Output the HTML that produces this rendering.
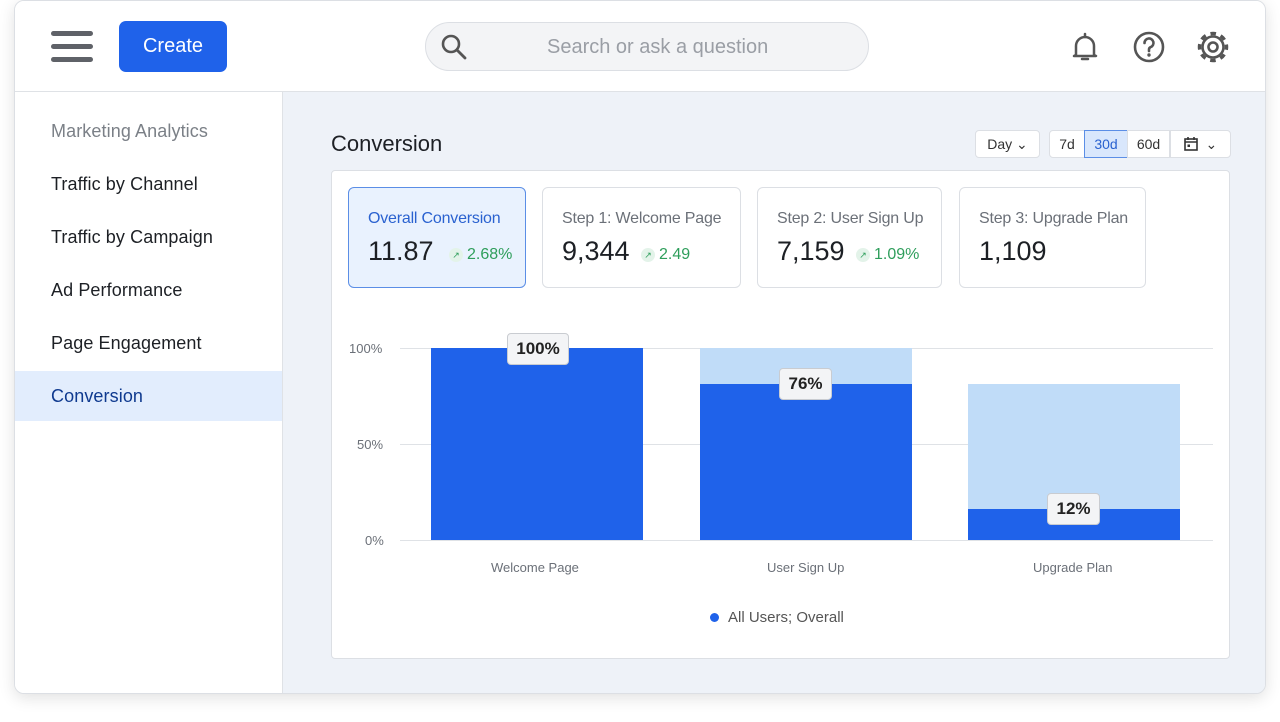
<!DOCTYPE html>
<html><head><meta charset="utf-8"><style>
*{box-sizing:border-box;margin:0;padding:0}
body{width:1280px;height:722px;background:#fff;font-family:"Liberation Sans",sans-serif;position:relative;overflow:hidden}
.frame{position:absolute;left:14px;top:0;width:1252px;height:694px;border:1px solid #dcdfe4;border-radius:10px;overflow:hidden;box-shadow:0 4px 16px rgba(0,0,0,.12);background:#fff}
.hdr{position:absolute;left:0;top:0;width:100%;height:91px;border-bottom:1px solid #dfe2e6;background:#fff}
.side{position:absolute;left:0;top:91px;width:268px;bottom:0;border-right:1px solid #dfe2e6;background:#fff}
.main{position:absolute;left:268px;top:91px;right:0;bottom:0;background:#eef2f8}
.abs{position:absolute}
.nav{position:absolute;left:36px;font-size:18px;color:#1d2025;letter-spacing:.1px}
.card{position:absolute;top:187px;height:101px;border:1px solid #dcdfe4;border-radius:6px;background:#fff}
.card .t{position:absolute;left:19px;top:22px;font-size:16px;color:#6b7078;letter-spacing:-.2px}
.card .v{position:absolute;left:19px;top:48px;font-size:27px;color:#1d2025}
.card .d{position:absolute;top:58px;font-size:16px;color:#2e9e5b}
.card .d i{display:inline-block;width:14px;height:14px;border-radius:7px;background:#e3f3e9;font-style:normal;font-size:9px;text-align:center;line-height:14px;margin-right:4px;vertical-align:1px}
.lbl{position:absolute;background:#f3f4f6;border:1px solid #c9ccd1;border-radius:4px;font-weight:bold;font-size:17px;color:#222;text-align:center;line-height:30px;height:32px}
.ax{position:absolute;font-size:13px;color:#6b7078}
.gl{position:absolute;left:400px;width:813px;height:1px;background:#dfe2e6}
.btn{position:absolute;top:130px;height:28px;border:1px solid #dcdfe4;background:#fff;font-size:14px;color:#333;line-height:26px;text-align:center}
</style></head><body>
<div class="frame">
 <div class="hdr">
  <div class="abs" style="left:36px;top:30px;width:42px;height:5px;background:#5f6268;border-radius:3px"></div>
  <div class="abs" style="left:36px;top:43px;width:42px;height:5px;background:#5f6268;border-radius:3px"></div>
  <div class="abs" style="left:36px;top:56px;width:42px;height:5px;background:#5f6268;border-radius:3px"></div>
  <div class="abs" style="left:104px;top:20px;width:108px;height:51px;background:#1f62ea;border-radius:7px;color:#fff;font-size:20px;text-align:center;line-height:51px">Create</div>
  <div class="abs" style="left:410px;top:21px;width:444px;height:49px;background:#f3f4f6;border:1px solid #dcdfe4;border-radius:25px"></div>
  <svg class="abs" style="left:425px;top:32px" width="28" height="28" viewBox="0 0 28 28"><circle cx="11" cy="11" r="8" fill="none" stroke="#555" stroke-width="2.6"/><path d="M17 17l8 8" stroke="#555" stroke-width="2.8" stroke-linecap="round"/></svg>
  <div class="abs" style="left:532px;top:35px;font-size:20px;color:#9a9ea5">Search or ask a question</div>
  <svg class="abs" style="left:1056px;top:30px" width="28" height="32" viewBox="0 0 28 32"><path d="M5 24V15a9 9 0 0 1 18 0v9l2 1H3z" fill="none" stroke="#555" stroke-width="2.5" stroke-linejoin="round"/><path d="M14 3v3M11 28h6" stroke="#555" stroke-width="2.5" stroke-linecap="round"/></svg>
  <svg class="abs" style="left:1117px;top:29px" width="34" height="34" viewBox="0 0 34 34"><circle cx="17" cy="17" r="14" fill="none" stroke="#555" stroke-width="2.6"/><path d="M12.5 13a4.5 4.5 0 1 1 6 4.2c-1 .5-1.5 1.2-1.5 2.3v1.5" fill="none" stroke="#555" stroke-width="2.6" stroke-linecap="round"/><circle cx="17" cy="25" r="1.7" fill="#555"/></svg>
  <svg class="abs" style="left:1180px;top:28px" width="36" height="36" viewBox="0 0 36 36"><circle cx="18" cy="18" r="13.5" fill="none" stroke="#555" stroke-width="3.5" stroke-dasharray="5.6 5" stroke-dashoffset="2.8"/><circle cx="18" cy="18" r="10.5" fill="none" stroke="#555" stroke-width="2.6"/><circle cx="18" cy="18" r="4.5" fill="none" stroke="#555" stroke-width="2.6"/></svg>
 </div>
 <div class="side">
  <div class="nav" style="top:29px;color:#7b8087">Marketing Analytics</div>
  <div class="nav" style="top:82px">Traffic by Channel</div>
  <div class="nav" style="top:135px">Traffic by Campaign</div>
  <div class="nav" style="top:188px">Ad Performance</div>
  <div class="nav" style="top:241px">Page Engagement</div>
  <div class="abs" style="left:0;top:279px;width:267px;height:50px;background:#e2edfd"></div>
  <div class="nav" style="top:294px;color:#0f3a8f">Conversion</div>
 </div>
 <div class="main"></div>
</div>
<div class="abs" style="left:331px;top:131px;font-size:22px;color:#1d2025">Conversion</div>
<div class="btn" style="left:975px;width:65px;border-radius:4px">Day &#8964;</div>
<div class="btn" style="left:1049px;width:36px;border-radius:4px 0 0 4px">7d</div>
<div class="btn" style="left:1084px;width:44px;background:#d9e7fc;border-color:#5b8ee6;color:#2a62d0">30d</div>
<div class="btn" style="left:1127px;width:43px">60d</div>
<div class="btn" style="left:1170px;width:61px;border-radius:0 4px 4px 0"><svg width="14" height="14" viewBox="0 0 14 14" style="vertical-align:-2px"><rect x="1" y="2" width="12" height="11" fill="none" stroke="#333" stroke-width="1.6"/><path d="M1 5h12M4 0v3M10 0v3" stroke="#333" stroke-width="1.6"/><rect x="3.5" y="7.5" width="2.5" height="2.5" fill="#333"/></svg> &nbsp;&#8964;</div>
<div class="abs" style="left:331px;top:170px;width:899px;height:489px;background:#fff;border:1px solid #dcdfe4;border-radius:4px"></div>
<div class="card" style="left:348px;width:178px;background:#e9f2fe;border-color:#5b8ee6"><div class="t" style="color:#2a62d0">Overall Conversion</div><div class="v">11.87</div><div class="d" style="left:100px"><i>↗</i>2.68%</div></div>
<div class="card" style="left:542px;width:199px"><div class="t">Step 1: Welcome Page</div><div class="v">9,344</div><div class="d" style="left:98px"><i>↗</i>2.49</div></div>
<div class="card" style="left:757px;width:185px"><div class="t">Step 2: User Sign Up</div><div class="v">7,159</div><div class="d" style="left:98px"><i>↗</i>1.09%</div></div>
<div class="card" style="left:959px;width:187px"><div class="t">Step 3: Upgrade Plan</div><div class="v">1,109</div></div>
<div class="gl" style="top:348px"></div><div class="gl" style="top:444px"></div><div class="gl" style="top:540px"></div>
<div class="ax" style="left:349px;top:341px">100%</div><div class="ax" style="left:357px;top:437px">50%</div><div class="ax" style="left:365px;top:533px">0%</div>
<div class="abs" style="left:431px;top:348px;width:212px;height:192px;background:#1f62ea"></div>
<div class="abs" style="left:700px;top:348px;width:212px;height:36px;background:#c0dcf8"></div>
<div class="abs" style="left:700px;top:384px;width:212px;height:156px;background:#1f62ea"></div>
<div class="abs" style="left:968px;top:384px;width:212px;height:125px;background:#c0dcf8"></div>
<div class="abs" style="left:968px;top:509px;width:212px;height:31px;background:#1f62ea"></div>
<div class="lbl" style="left:507px;top:333px;width:62px">100%</div>
<div class="lbl" style="left:779px;top:368px;width:53px">76%</div>
<div class="lbl" style="left:1047px;top:493px;width:53px">12%</div>
<div class="ax" style="left:491px;top:560px">Welcome Page</div>
<div class="ax" style="left:767px;top:560px">User Sign Up</div>
<div class="ax" style="left:1033px;top:560px">Upgrade Plan</div>
<div class="abs" style="left:710px;top:613px;width:9px;height:9px;border-radius:5px;background:#1f62ea"></div>
<div class="abs" style="left:728px;top:609px;font-size:15px;color:#555">All Users; Overall</div>
</body></html>
